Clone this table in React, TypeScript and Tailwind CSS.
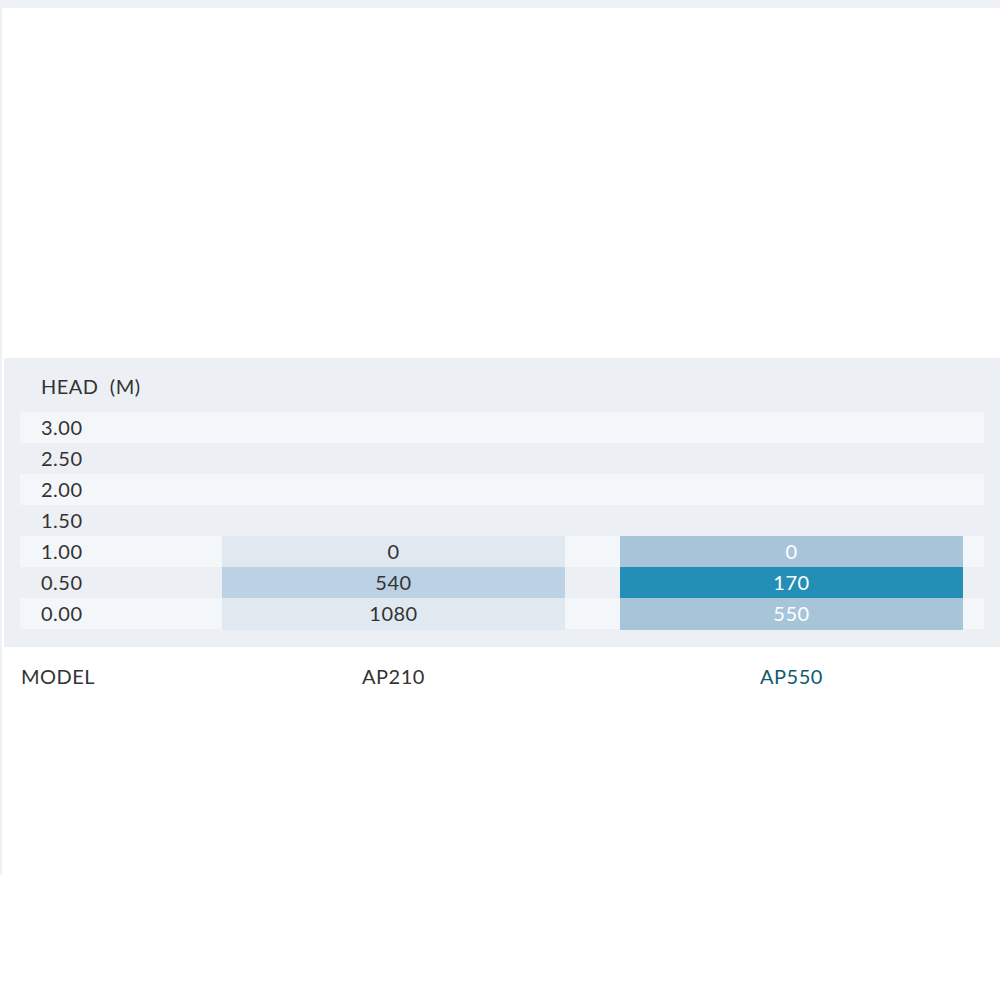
import React from "react";

type Row = { label: string; a?: string; b?: string };

const rows: Row[] = [
  { label: "3.00" },
  { label: "2.50" },
  { label: "2.00" },
  { label: "1.50" },
  { label: "1.00", a: "0", b: "0" },
  { label: "0.50", a: "540", b: "170" },
  { label: "0.00", a: "1080", b: "550" },
];

export default function App() {
  return (
    <div className="w-[1000px] h-[1000px] bg-white" style={{ fontFamily: "Lato, 'Open Sans', sans-serif" }}>
      <div className="h-[8px] bg-[#eef1f6]" />
      <div className="flex">
        <div className="w-[2px] h-[867px] bg-[#eef1f6]" />
        <div className="flex-1 pl-[2px]">
          <div className="h-[350px]" />
          <div className="bg-[#ecf0f4] pt-[17px] pb-[18px] px-[16px]">
            <div className="h-[37px] pl-[21px] text-[20px] leading-[22px] tracking-[0.5px] text-[#333]">HEAD&nbsp;&nbsp;(M)</div>
            <div className="flex flex-col">
              {rows.map((r, i) => {
                const light = i % 2 === 0;
                return (
                  <div
                    key={r.label}
                    className={
                      "grid grid-cols-[202px_343px_55px_343px_1fr] h-[31px] items-stretch text-[20px] tracking-[0.5px] " +
                      (light ? "bg-[#f4f7fa]" : "bg-[#ecf0f4]")
                    }
                  >
                    <div className="pl-[21px] pb-[2px] flex items-center text-[#333]">{r.label}</div>
                    <div
                      className={
                        "flex items-center justify-center pb-[2px] text-[#333] " +
                        (r.a === undefined ? "" : i === 5 ? "bg-[#bcd2e4]" : "bg-[#e0e8f0]")
                      }
                    >
                      {r.a}
                    </div>
                    <div />
                    <div
                      className={
                        "flex items-center justify-center pb-[2px] text-white " +
                        (r.b === undefined ? "" : i === 5 ? "bg-[#238fb6]" : "bg-[#a7c5d9]")
                      }
                    >
                      {r.b}
                    </div>
                    <div />
                  </div>
                );
              })}
            </div>
          </div>
          <div className="grid grid-cols-[218px_343px_55px_343px_1fr] pt-[18px] text-[20px] leading-[22px] tracking-[0.5px] text-[#333]">
            <div className="pl-[17px]">MODEL</div>
            <div className="text-center">AP210</div>
            <div />
            <div className="text-center text-[#115a6e]">AP550</div>
            <div />
          </div>
        </div>
      </div>
    </div>
  );
}
